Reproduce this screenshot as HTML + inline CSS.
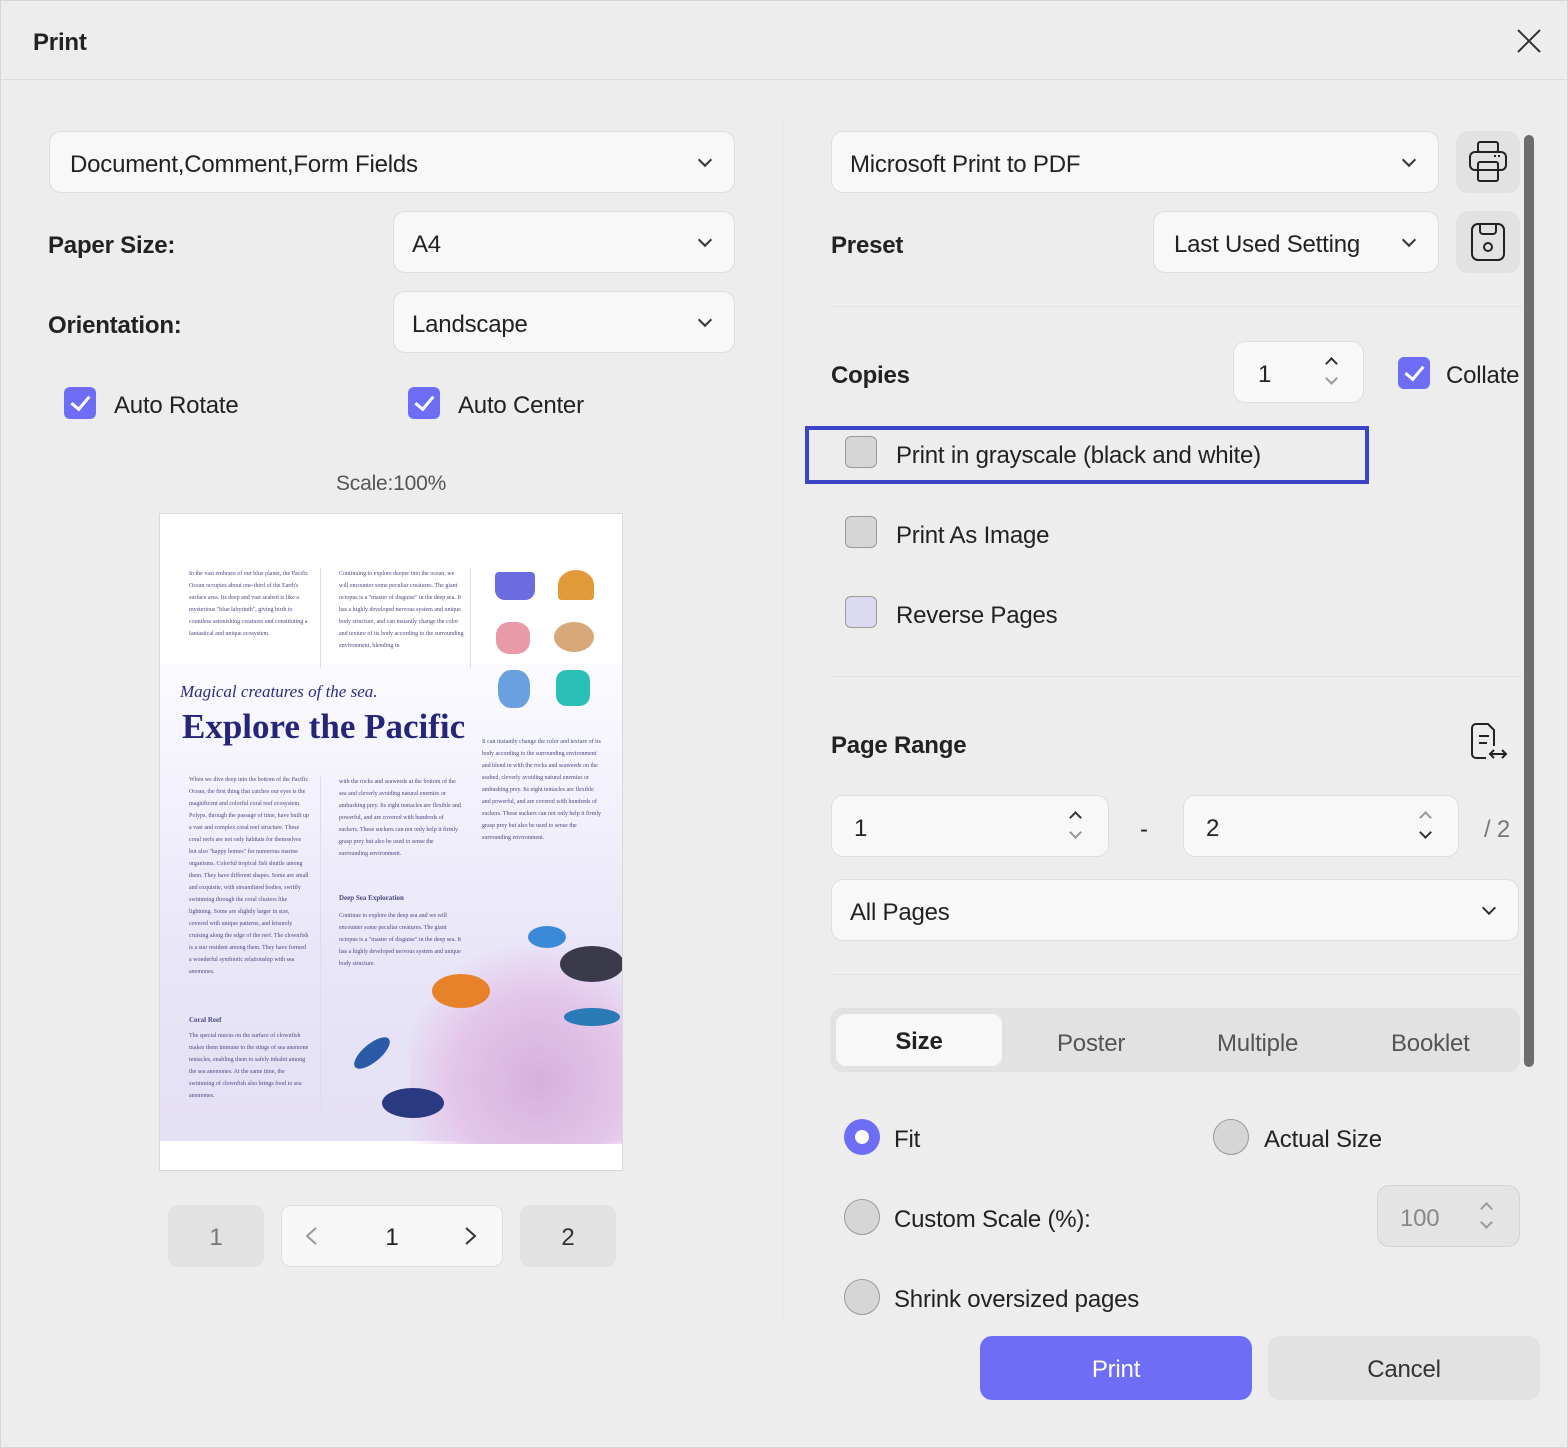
<!DOCTYPE html>
<html><head><meta charset="utf-8"><style>
*{box-sizing:border-box;margin:0;padding:0}
body{width:1568px;height:1448px;background:#eeeded;font-family:"Liberation Sans",sans-serif;color:#222;position:relative;overflow:hidden;letter-spacing:-0.2px}
.a{position:absolute}
.box{position:absolute;background:#f8f8f8;border:1px solid #dedede;border-radius:12px;font-size:24px;display:flex;align-items:center;padding-left:18px;padding-top:5px}
.chev{position:absolute;right:24px;top:50%;width:10px;height:10px;border-right:2px solid #333;border-bottom:2px solid #333;transform:translateY(-70%) rotate(45deg)}
.lbl{position:absolute;font-size:24px;font-weight:bold;margin-top:2px}
.t{position:absolute;font-size:24px;margin-top:2px}
.cb{position:absolute;width:32px;height:32px;border-radius:6px;background:#d6d6d6;border:1.5px solid #9a9a9a}
.cbon{position:absolute;width:32px;height:32px;border-radius:6px;background:#6d6ef5}
.cbon:after{content:"";position:absolute;left:11px;top:5px;width:8px;height:15px;border-right:3px solid #fff;border-bottom:3px solid #fff;transform:rotate(40deg)}
.rad{position:absolute;width:36px;height:36px;border-radius:50%;background:#d6d6d6;border:1.5px solid #9a9a9a}
.pt{position:absolute;font-family:"Liberation Serif",serif;font-size:6px;line-height:12px;color:#4a4a80;letter-spacing:0}
.up{position:absolute;width:9px;height:9px;border-left:2px solid #333;border-top:2px solid #333;transform:rotate(45deg)}
.dn{position:absolute;width:9px;height:9px;border-right:2px solid #999;border-bottom:2px solid #999;transform:rotate(45deg)}
</style></head><body>
<div class="a" style="left:0;top:0;width:1568px;height:1448px;border:1px solid #d6d6d6"></div>
<div class="a" style="left:0;top:0;width:1568px;height:80px;border-bottom:1px solid #dcdcdc"></div>
<div class="a" style="left:33px;top:29px;font-size:24px;font-weight:bold">Print</div>
<svg class="a" style="left:1516px;top:28px" width="26" height="26"><path d="M2 2L24 24M24 2L2 24" stroke="#333" stroke-width="2"/></svg>

<div class="box" style="left:49px;top:131px;width:686px;height:62px;padding-left:20px">Document,Comment,Form Fields<div class="chev"></div></div>
<div class="lbl" style="left:48px;top:230px">Paper Size:</div>
<div class="box" style="left:393px;top:211px;width:342px;height:62px">A4<div class="chev"></div></div>
<div class="lbl" style="left:48px;top:310px">Orientation:</div>
<div class="box" style="left:393px;top:291px;width:342px;height:62px">Landscape<div class="chev"></div></div>
<div class="cbon" style="left:64px;top:387px"></div><div class="t" style="left:114px;top:390px">Auto Rotate</div>
<div class="cbon" style="left:408px;top:387px"></div><div class="t" style="left:458px;top:390px">Auto Center</div>
<div class="t" style="left:336px;top:470px;font-size:21px;color:#555">Scale:100%</div>

<div class="a" style="left:159px;top:513px;width:464px;height:658px;background:#fff;border:1px solid #d8d8d8;overflow:hidden">
 <div class="a" style="left:0;top:150px;width:464px;height:477px;background:linear-gradient(#fbfbff,#e9e6f8 60%,#e4dff5)"></div>
 <div class="a" style="left:250px;top:420px;width:214px;height:210px;background:radial-gradient(circle at 60% 70%,#d6b0dc,#e4c6ea 45%,rgba(230,210,240,0) 72%)"></div>
 <div class="pt" style="left:29px;top:54px;width:120px">In the vast embrace of our blue planet, the Pacific Ocean occupies about one-third of the Earth's surface area. Its deep and vast seabed is like a mysterious "blue labyrinth", giving birth to countless astonishing creatures and constituting a fantastical and unique ecosystem.</div>
 <div class="a" style="left:160px;top:54px;width:1px;height:100px;background:#dde"></div>
 <div class="pt" style="left:179px;top:54px;width:125px">Continuing to explore deeper into the ocean, we will encounter some peculiar creatures. The giant octopus is a "master of disguise" in the deep sea. It has a highly developed nervous system and unique body structure, and can instantly change the color and texture of its body according to the surrounding environment, blending in</div>
 <div class="a" style="left:310px;top:54px;width:1px;height:100px;background:#dde"></div>
 <div class="a" style="left:335px;top:58px;width:40px;height:28px;background:#6a6ce0;border-radius:4px 4px 10px 10px"></div>
 <div class="a" style="left:398px;top:56px;width:36px;height:30px;background:#e09a3a;border-radius:50% 50% 10% 10%"></div>
 <div class="a" style="left:336px;top:108px;width:34px;height:32px;background:#e89aa8;border-radius:40%"></div>
 <div class="a" style="left:394px;top:108px;width:40px;height:30px;background:#d8a878;border-radius:50%"></div>
 <div class="a" style="left:338px;top:156px;width:32px;height:38px;background:#6aa0e0;border-radius:40%"></div>
 <div class="a" style="left:396px;top:156px;width:34px;height:36px;background:#2ac0b8;border-radius:30%"></div>
 <div class="a" style="left:20px;top:168px;font-family:'Liberation Serif',serif;font-style:italic;font-size:17px;color:#2b2b80;letter-spacing:0">Magical creatures of the sea.</div>
 <div class="a" style="left:22px;top:193px;font-family:'Liberation Serif',serif;font-weight:bold;font-size:35px;color:#25257a;letter-spacing:0">Explore the Pacific</div>
 <div class="pt" style="left:29px;top:260px;width:120px">When we dive deep into the bottom of the Pacific Ocean, the first thing that catches our eyes is the magnificent and colorful coral reef ecosystem. Polyps, through the passage of time, have built up a vast and complex coral reef structure. These coral reefs are not only habitats for themselves but also "happy homes" for numerous marine organisms. Colorful tropical fish shuttle among them. They have different shapes. Some are small and exquisite, with streamlined bodies, swiftly swimming through the coral clusters like lightning. Some are slightly larger in size, covered with unique patterns, and leisurely cruising along the edge of the reef. The clownfish is a star resident among them. They have formed a wonderful symbiotic relationship with sea anemones.</div>
 <div class="pt" style="left:29px;top:500px;width:120px;font-weight:bold;font-size:7px">Coral Reef</div>
 <div class="pt" style="left:29px;top:516px;width:120px">The special mucus on the surface of clownfish makes them immune to the stings of sea anemone tentacles, enabling them to safely inhabit among the sea anemones. At the same time, the swimming of clownfish also brings food to sea anemones.</div>
 <div class="a" style="left:160px;top:262px;width:1px;height:340px;background:#dde"></div>
 <div class="pt" style="left:179px;top:262px;width:125px">with the rocks and seaweeds at the bottom of the sea and cleverly avoiding natural enemies or ambushing prey. Its eight tentacles are flexible and powerful, and are covered with hundreds of suckers. These suckers can not only help it firmly grasp prey but also be used to sense the surrounding environment.</div>
 <div class="pt" style="left:179px;top:378px;width:125px;font-weight:bold;font-size:7px">Deep Sea Exploration</div>
 <div class="pt" style="left:179px;top:396px;width:125px">Continue to explore the deep sea and we will encounter some peculiar creatures. The giant octopus is a "master of disguise" in the deep sea. It has a highly developed nervous system and unique body structure.</div>
 <div class="pt" style="left:322px;top:222px;width:120px">It can instantly change the color and texture of its body according to the surrounding environment and blend in with the rocks and seaweeds on the seabed, cleverly avoiding natural enemies or ambushing prey. Its eight tentacles are flexible and powerful, and are covered with hundreds of suckers. These suckers can not only help it firmly grasp prey but also be used to sense the surrounding environment.</div>
 <div class="a" style="left:368px;top:412px;width:38px;height:22px;background:#3a8ad8;border-radius:50%"></div>
 <div class="a" style="left:400px;top:432px;width:64px;height:36px;background:#3a3a4a;border-radius:50%"></div>
 <div class="a" style="left:272px;top:460px;width:58px;height:34px;background:#e8822a;border-radius:50%"></div>
 <div class="a" style="left:404px;top:494px;width:56px;height:18px;background:#2a7ab8;border-radius:50%"></div>
 <div class="a" style="left:190px;top:530px;width:44px;height:18px;background:#2a5aa8;border-radius:50%;transform:rotate(-40deg)"></div>
 <div class="a" style="left:222px;top:574px;width:62px;height:30px;background:#2a3a80;border-radius:50%"></div>
</div>

<div class="a" style="left:168px;top:1205px;width:96px;height:62px;background:#e2e2e2;border-radius:10px;font-size:24px;color:#777;text-align:center;line-height:66px">1</div>
<div class="a" style="left:281px;top:1205px;width:222px;height:62px;background:#f7f7f7;border:1px solid #ddd;border-radius:10px;font-size:24px;text-align:center;line-height:64px">1</div>
<svg class="a" style="left:304px;top:1226px" width="14" height="20"><path d="M12 2L3 10L12 18" stroke="#999" stroke-width="2" fill="none"/></svg>
<svg class="a" style="left:464px;top:1226px" width="14" height="20"><path d="M2 2L11 10L2 18" stroke="#333" stroke-width="2" fill="none"/></svg>
<div class="a" style="left:520px;top:1205px;width:96px;height:62px;background:#e2e2e2;border-radius:10px;font-size:24px;color:#333;text-align:center;line-height:66px">2</div>

<div class="a" style="left:782px;top:120px;width:1px;height:1200px;background:#e4e4e4"></div>

<div class="box" style="left:831px;top:131px;width:608px;height:62px">Microsoft Print to PDF<div class="chev"></div></div>
<div class="a" style="left:1456px;top:131px;width:64px;height:62px;background:#e2e2e2;border-radius:12px"></div>
<svg class="a" style="left:1468px;top:140px" width="40" height="44" fill="none" stroke="#222" stroke-width="2"><rect x="10" y="2" width="20" height="10" rx="2"/><rect x="2" y="12" width="36" height="18" rx="5"/><rect x="10" y="22" width="20" height="19" rx="2"/><path d="M26 16h2M30 16h2"/></svg>
<div class="lbl" style="left:831px;top:230px">Preset</div>
<div class="box" style="left:1153px;top:211px;width:286px;height:62px;padding-left:20px">Last Used Setting<div class="chev"></div></div>
<div class="a" style="left:1456px;top:211px;width:64px;height:62px;background:#e2e2e2;border-radius:12px"></div>
<svg class="a" style="left:1470px;top:222px" width="36" height="40" fill="none" stroke="#222" stroke-width="2"><path d="M8 2H28a6 6 0 0 1 6 6V32a6 6 0 0 1-6 6H8a6 6 0 0 1-6-6V8a6 6 0 0 1 6-6z"/><path d="M10 2v7a3 3 0 0 0 3 3h10a3 3 0 0 0 3-3V2"/><circle cx="18" cy="25" r="4"/></svg>
<div class="a" style="left:831px;top:306px;width:690px;height:1px;background:#e2e2e2"></div>
<div class="a" style="left:1524px;top:135px;width:10px;height:932px;background:#6d6d6d;border-radius:5px"></div>

<div class="lbl" style="left:831px;top:360px">Copies</div>
<div class="box" style="left:1233px;top:341px;width:131px;height:62px;padding-left:24px">1</div>
<div class="up" style="left:1327px;top:359px"></div><div class="dn" style="left:1327px;top:374px"></div>
<div class="cbon" style="left:1398px;top:357px"></div><div class="t" style="left:1446px;top:360px">Collate</div>
<div class="a" style="left:805px;top:426px;width:564px;height:58px;border:4px solid #3b44c8;background:#eeeded"></div>
<div class="cb" style="left:845px;top:436px"></div><div class="t" style="left:896px;top:440px">Print in grayscale (black and white)</div>
<div class="cb" style="left:845px;top:516px"></div><div class="t" style="left:896px;top:520px">Print As Image</div>
<div class="cb" style="left:845px;top:596px;background:#dcdaf0"></div><div class="t" style="left:896px;top:600px">Reverse Pages</div>
<div class="a" style="left:831px;top:676px;width:690px;height:1px;background:#e2e2e2"></div>

<div class="lbl" style="left:831px;top:730px">Page Range</div>
<svg class="a" style="left:1470px;top:722px" width="40" height="40" fill="none" stroke="#222" stroke-width="2"><path d="M24 24V8l-6-6H6a4 4 0 0 0-4 4v26a4 4 0 0 0 4 4h10"/><path d="M9 14h10M9 21h8"/><path d="M20 32h16M24 28l-4 4 4 4M32 28l4 4-4 4"/></svg>
<div class="box" style="left:831px;top:795px;width:278px;height:62px;padding-left:22px">1</div>
<div class="up" style="left:1071px;top:813px"></div><div class="dn" style="left:1071px;top:828px"></div>
<div class="t" style="left:1140px;top:814px">-</div>
<div class="box" style="left:1183px;top:795px;width:276px;height:62px;padding-left:22px">2</div>
<div class="dn" style="left:1421px;top:813px;transform:rotate(225deg)"></div><div class="dn" style="left:1421px;top:828px;border-color:#333"></div>
<div class="t" style="left:1484px;top:814px;color:#777">/ 2</div>
<div class="box" style="left:831px;top:879px;width:688px;height:62px">All Pages<div class="chev"></div></div>
<div class="a" style="left:831px;top:974px;width:690px;height:1px;background:#e2e2e2"></div>

<div class="a" style="left:830px;top:1008px;width:690px;height:64px;background:#e2e2e2;border-radius:12px"></div>
<div class="a" style="left:836px;top:1014px;width:166px;height:52px;background:#f8f8f8;border-radius:10px;font-size:24px;font-weight:bold;text-align:center;line-height:56px">Size</div>
<div class="t" style="left:1057px;top:1028px;color:#555">Poster</div>
<div class="t" style="left:1217px;top:1028px;color:#555">Multiple</div>
<div class="t" style="left:1391px;top:1028px;color:#555">Booklet</div>

<div class="a" style="left:844px;top:1119px;width:36px;height:36px;border-radius:50%;background:#6d6ef5"></div>
<div class="a" style="left:855px;top:1130px;width:14px;height:14px;border-radius:50%;background:#fff"></div>
<div class="t" style="left:894px;top:1124px">Fit</div>
<div class="rad" style="left:1213px;top:1119px"></div><div class="t" style="left:1264px;top:1124px">Actual Size</div>
<div class="rad" style="left:844px;top:1199px"></div><div class="t" style="left:894px;top:1204px">Custom Scale (%):</div>
<div class="a" style="left:1377px;top:1185px;width:143px;height:62px;background:#e4e4e4;border:1px solid #d4d4d4;border-radius:12px;font-size:24px;color:#888;padding:19px 0 0 22px">100</div>
<div class="dn" style="left:1482px;top:1204px;transform:rotate(225deg)"></div><div class="dn" style="left:1482px;top:1218px"></div>
<div class="rad" style="left:844px;top:1279px"></div><div class="t" style="left:894px;top:1284px">Shrink oversized pages</div>

<div class="a" style="left:980px;top:1336px;width:272px;height:64px;background:#6d6ef5;border-radius:12px;color:#fff;font-size:24px;text-align:center;line-height:68px">Print</div>
<div class="a" style="left:1268px;top:1336px;width:272px;height:64px;background:#e2e2e2;border-radius:12px;color:#333;font-size:24px;text-align:center;line-height:68px">Cancel</div>
</body></html>
